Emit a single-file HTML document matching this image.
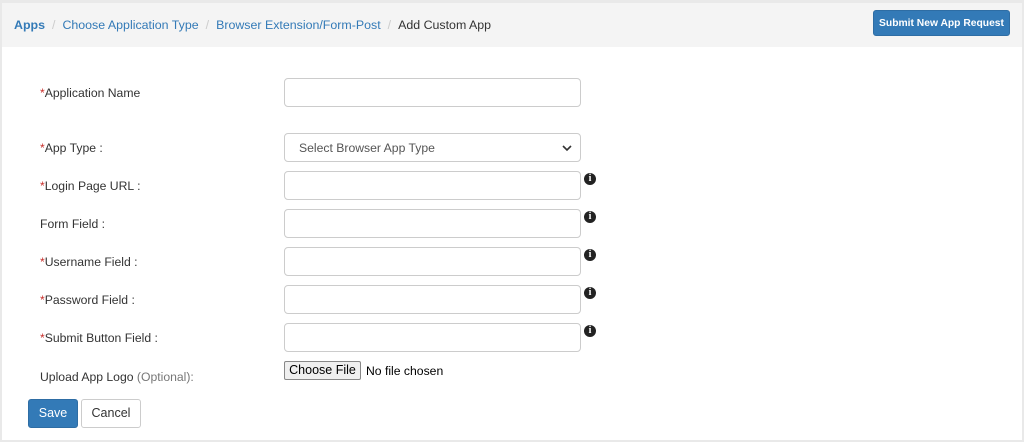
<!DOCTYPE html>
<html><head><style>
*{box-sizing:border-box}
body{margin:0;width:1024px;height:442px;background:#e9e9e9;font-family:"Liberation Sans",Arial,sans-serif;font-size:13px;color:#333;position:relative;overflow:hidden}
.card{position:absolute;left:2px;top:3px;right:2px;bottom:2px;background:#fff}
.hdr{position:absolute;left:0;top:0;right:0;height:44px;background:#f4f4f4}
.bc{position:absolute;left:12px;top:15px;font-size:12.4px;color:#337ab7}
.bc b{font-weight:bold}
.bc .s{color:#ccc;margin:0 7px}
.bc .c{color:#333}
.sub{position:absolute;left:871px;top:7px;width:137px;height:26px;background:#337ab7;border:1px solid #2e6da4;border-radius:3px;color:#fff;font-size:10.3px;font-weight:bold;display:flex;align-items:center;justify-content:center;white-space:nowrap}
.lbl{position:absolute;left:38px;font-size:12.2px;color:#333}
.lbl i{color:#c9302c;font-style:normal}
.in{position:absolute;left:282px;width:297px;height:29px;border:1px solid #ccc;border-radius:4px;background:#fff}
.info{position:absolute;left:582px;width:12px;height:12px;border-radius:50%;background:#222;color:#fff;font-size:10px;font-weight:bold;text-align:center;line-height:12px;font-family:"Liberation Serif",serif}
.sel{color:#555;font-size:12.2px;padding:7px 0 0 14px}
.sel svg{position:absolute;right:8px;top:11px}
.fb{position:absolute;left:282px;top:358px;width:77px;height:19px;border:1px solid #888;border-radius:2px;background:#efefef;font-size:12.5px;text-align:center;line-height:17px;color:#000}
.nf{position:absolute;left:364px;top:361px;font-size:12.2px;color:#000}
.btn{position:absolute;top:396px;height:29px;border-radius:3px;font-size:12.5px;text-align:center;line-height:27px}
</style></head><body>
<div class="card">
<div class="hdr">
<div class="bc"><b>Apps</b><span class="s">/</span>Choose Application Type<span class="s">/</span>Browser Extension/Form-Post<span class="s">/</span><span class="c">Add Custom App</span></div>
<div class="sub">Submit New App Request</div>
</div>
<div class="lbl" style="top:83px"><i>*</i>Application Name</div>
<div class="in" style="top:75px"></div>
<div class="lbl" style="top:138px"><i>*</i>App Type :</div>
<div class="in sel" style="top:130px">Select Browser App Type<svg width="10" height="7" viewBox="0 0 10 7"><path d="M1 1l4 4 4-4" stroke="#333" stroke-width="1.6" fill="none"/></svg></div>
<div class="lbl" style="top:176px"><i>*</i>Login Page URL :</div>
<div class="in" style="top:168px"></div><div class="info" style="top:170px">i</div>
<div class="lbl" style="top:214px">Form Field :</div>
<div class="in" style="top:206px"></div><div class="info" style="top:208px">i</div>
<div class="lbl" style="top:252px"><i>*</i>Username Field :</div>
<div class="in" style="top:244px"></div><div class="info" style="top:246px">i</div>
<div class="lbl" style="top:290px"><i>*</i>Password Field :</div>
<div class="in" style="top:282px"></div><div class="info" style="top:284px">i</div>
<div class="lbl" style="top:328px"><i>*</i>Submit Button Field :</div>
<div class="in" style="top:320px"></div><div class="info" style="top:322px">i</div>
<div class="lbl" style="top:367px">Upload App Logo <span style="color:#777">(Optional):</span></div>
<div class="fb">Choose File</div><div class="nf">No file chosen</div>
<div class="btn" style="left:26px;width:50px;background:#337ab7;border:1px solid #2e6da4;color:#fff">Save</div>
<div class="btn" style="left:79px;width:60px;background:#fff;border:1px solid #ccc;color:#333">Cancel</div>
</div>
</body></html>
